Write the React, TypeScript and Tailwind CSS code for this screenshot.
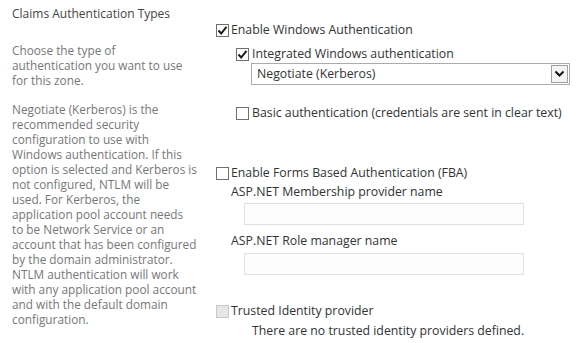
import React, { FC } from 'react'

const Box: FC<{ checked?: boolean; disabled?: boolean }> = ({ checked, disabled }) => (
  <span
    className={`relative flex h-[13px] w-[13px] shrink-0 items-center justify-center border ${
      disabled ? 'border-[#c8c8c8] bg-[#e6e6e6]' : 'border-[#6f6f6f] bg-white'
    }`}
  >
    {checked && (
      <svg width="11" height="11" viewBox="0 0 11 11">
        <path d="M1.5 5.5 L4.2 8.5 L9.5 1.8" fill="none" stroke="#1a1a1a" strokeWidth="2" />
      </svg>
    )}
  </span>
)

const Check: FC<{ label: string; checked?: boolean; disabled?: boolean; gap?: string; className?: string }> = ({
  label,
  checked,
  disabled,
  gap = 'gap-[2px]',
  className = ''
}) => (
  <div className={`flex h-[18px] items-center whitespace-nowrap ${gap} ${className}`}>
    <Box checked={checked} disabled={disabled} />
    <span>{label}</span>
  </div>
)

const desc1 = ['Choose the type of', 'authentication you want to use', 'for this zone.']
const desc2 = [
  'Negotiate (Kerberos) is the',
  'recommended security',
  'configuration to use with',
  'Windows authentication. If this',
  'option is selected and Kerberos is',
  'not configured, NTLM will be',
  'used. For Kerberos, the',
  'application pool account needs',
  'to be Network Service or an',
  'account that has been configured',
  'by the domain administrator.',
  'NTLM authentication will work',
  'with any application pool account',
  'and with the default domain',
  'configuration.'
]

export default function App() {
  return (
    <div className="flex h-[343px] w-[577px] overflow-hidden bg-white font-['Segoe_UI','Open_Sans',sans-serif]">
      <div className="w-[216px] shrink-0 pl-3 pt-[5px]">
        <div className="h-[18px] text-[12px] leading-[18px] text-[#444]">Claims Authentication Types</div>
        <div className="mt-[20px] text-[11.8px] leading-[15px] text-[#777]">
          {desc1.map(l => (
            <div key={l} className="whitespace-nowrap">{l}</div>
          ))}
        </div>
        <div className="mt-[14px] text-[11.8px] leading-[15px] text-[#777]">
          {desc2.map(l => (
            <div key={l} className="whitespace-nowrap">{l}</div>
          ))}
        </div>
      </div>

      <div className="flex flex-col pt-[21px] text-[12.3px] leading-[18px] text-[#333]">
        <Check label="Enable Windows Authentication" checked />
        <Check label="Integrated Windows authentication" checked gap="gap-[3px]" className="mt-[6px] pl-5" />
        <div className="ml-[35px] flex h-[22px] w-[319px] items-center justify-between border border-[#ababab] bg-white pl-[5px] pr-[1px]">
          <span>Negotiate (Kerberos)</span>
          <span className="flex h-[18px] w-[17px] items-center justify-center border border-[#a0a0a0] bg-[#f4f4f4]">
            <svg width="11" height="8" viewBox="0 0 11 8">
              <path d="M1.5 1.5 L5.5 5.5 L9.5 1.5" fill="none" stroke="#111" strokeWidth="2" />
            </svg>
          </span>
        </div>
        <Check
          label="Basic authentication (credentials are sent in clear text)"
          gap="gap-[3px]"
          className="mt-[19px] pl-5"
        />
        <Check label="Enable Forms Based Authentication (FBA)" className="mt-[42px]" />
        <div className="mt-[1px] h-[18px] pl-[15px]">ASP.NET Membership provider name</div>
        <div className="ml-[28px] mt-[2px] h-[22px] w-[280px] border border-[#e1e1e1] bg-[#fdfdfd]" />
        <div className="mt-[7px] h-[18px] pl-[15px]">ASP.NET Role manager name</div>
        <div className="ml-[28px] mt-[3px] h-[22px] w-[280px] border border-[#e1e1e1] bg-[#fdfdfd]" />
        <Check label="Trusted Identity provider" disabled className="mt-[27px]" />
        <div className="mt-[2px] h-[18px] pl-[36px]">There are no trusted identity providers defined.</div>
      </div>
    </div>
  )
}
